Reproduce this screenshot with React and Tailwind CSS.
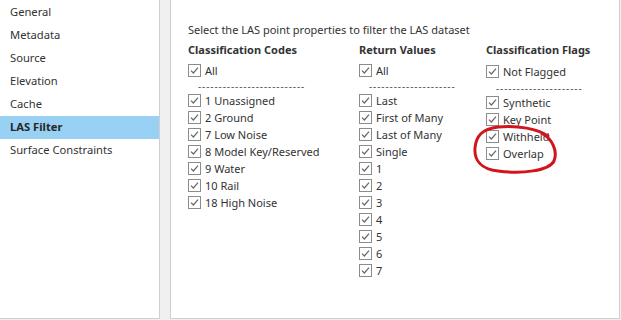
import React from "react";

const F = { fontFamily: '"Noto Sans", "Open Sans", sans-serif' };

function Check({ label }) {
  return (
    <div className="flex items-center h-[17px] gap-[4px]">
      <span className="w-[13px] h-[13px] border border-[#8c8c8c] bg-white flex items-center justify-center shrink-0">
        <svg width="11" height="11" viewBox="0 0 11 11">
          <path d="M2 5.6 L4.4 8 L9 2.6" fill="none" stroke="#666" strokeWidth="1.2" />
        </svg>
      </span>
      <span className="text-[11px] leading-[17px] text-[#333] whitespace-nowrap">{label}</span>
    </div>
  );
}

function Dashes({ n }) {
  return (
    <div className="h-[13px] flex items-center text-[10px] text-[#555] leading-none tracking-[0.9px] pl-[10px] overflow-hidden whitespace-nowrap">
      {"-".repeat(n)}
    </div>
  );
}

function Col({ title, all, items, width, dn, offset }) {
  return (
    <div className="flex flex-col" style={{ width }}>
      <div className="h-[17px] text-[11px] font-bold leading-[17px] text-[#333] whitespace-nowrap">{title}</div>
      <div className={offset ? "mt-[5px]" : "mt-[4px]"}>
        <Check label={all} />
      </div>
      <div className={offset ? "mt-[1px]" : "mt-0"}>
        <Dashes n={dn} />
      </div>
      <div>
        {items.map((t) => (
          <Check key={t} label={t} />
        ))}
      </div>
    </div>
  );
}

export default function App() {
  const nav = ["General", "Metadata", "Source", "Elevation", "Cache", "LAS Filter", "Surface Constraints"];
  return (
    <div className="relative w-[621px] h-[320px] bg-[#f0f0f0] flex overflow-hidden" style={F}>
      <div className="w-[160px] h-[319px] bg-white border-r border-b border-[#cfcfcf] pt-[1px]">
        {nav.map((n) => (
          <div
            key={n}
            className={
              "h-[23px] pl-[10px] flex items-center text-[11.2px] " +
              (n === "LAS Filter" ? "bg-[#99d1f4] font-bold text-[#262626]" : "text-[#333]")
            }
          >
            {n}
          </div>
        ))}
      </div>
      <div className="ml-[10px] w-[450px] h-[319px] bg-white border-l border-r border-b border-[#cfcfcf] pl-[17px] pt-[22px]">
        <div className="h-[16px] text-[11px] leading-[16px] text-[#333] whitespace-nowrap">
          Select the LAS point properties to filter the LAS dataset
        </div>
        <div className="flex mt-[3px]">
          <Col
            title="Classification Codes"
            all="All"
            width={171}
            dn={26}
            items={["1 Unassigned", "2 Ground", "7 Low Noise", "8 Model Key/Reserved", "9 Water", "10 Rail", "18 High Noise"]}
          />
          <Col
            title="Return Values"
            all="All"
            width={127}
            dn={21}
            items={["Last", "First of Many", "Last of Many", "Single", "1", "2", "3", "4", "5", "6", "7"]}
          />
          <Col
            title="Classification Flags"
            all="Not Flagged"
            width={130}
            dn={21}
            offset
            items={["Synthetic", "Key Point", "Withheld", "Overlap"]}
          />
        </div>
      </div>
      <svg className="absolute left-0 top-0 pointer-events-none" width="621" height="320">
        <path
          d="M543 134 C552 139, 558 151, 554 161 C549 171, 522 174, 498 171 C481 169, 474 160, 475 148 C476 136, 482 129, 498 127 C518 125, 538 129, 548 136"
          fill="none"
          stroke="#d2141c"
          strokeWidth="3"
          strokeLinecap="round"
        />
      </svg>
    </div>
  );
}
